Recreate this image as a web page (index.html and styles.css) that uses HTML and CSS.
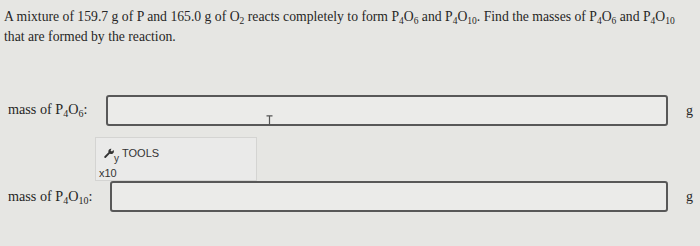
FILE: index.html
```html
<!DOCTYPE html>
<html>
<head>
<meta charset="utf-8">
<link rel="stylesheet" href="styles.css">
</head>
<body>
<div class="page">
  <p class="question">A mixture of 159.7 g of P and 165.0 g of O<sub>2</sub> reacts completely to form P<sub>4</sub>O<sub>6</sub> and P<sub>4</sub>O<sub>10</sub>. Find the masses of P<sub>4</sub>O<sub>6</sub> and P<sub>4</sub>O<sub>10</sub><br>that are formed by the reaction.</p>

  <div class="row row-first">
    <span class="label">mass of P<sub>4</sub>O<sub>6</sub>:</span>
    <div class="field">
      <svg class="ibeam" width="7" height="10" viewBox="0 0 7 10"><path d="M0.5 0.8 H6.5 M3.5 0.8 V9.5" stroke="#555" stroke-width="1.2" fill="none"/></svg>
    </div>
    <span class="unit">g</span>
  </div>

  <div class="tools">
    <div class="tools-top">
      <svg class="wrench" width="10" height="10" viewBox="0 0 10 10"><path d="M1.2 9 L6 4.2" stroke="#333" stroke-width="1.8" stroke-linecap="round" fill="none"/><path d="M4.6 4.4 A2.6 2.6 0 0 1 7.4 0.8 L6.6 2.8 L8 3.6 L9.4 2 A2.6 2.6 0 0 1 5.8 5.6 Z" fill="#333"/></svg>
      <span class="y">y</span>
      <span class="tools-label">TOOLS</span>
    </div>
    <div class="x10">x10</div>
  </div>

  <div class="row row-second">
    <span class="label">mass of P<sub>4</sub>O<sub>10</sub>:</span>
    <div class="field"></div>
    <span class="unit">g</span>
  </div>
</div>
</body>
</html>
```

FILE: styles.css
```css
html, body {
  margin: 0;
  padding: 0;
}
body {
  background: #e6e6e3;
  width: 700px;
  height: 246px;
  overflow: hidden;
  font-family: "Liberation Serif", "Times New Roman", serif;
  color: #262626;
}
.page {
  padding: 7px 0 0 4px;
}
.question {
  margin: 0;
  font-size: 13.7px;
  line-height: 20px;
}
sub {
  font-size: 9.5px;
  vertical-align: -3px;
  line-height: 0;
}
.row {
  display: flex;
  align-items: center;
  gap: 18px;
  padding-left: 4px;
  padding-right: 6px;
  height: 31px;
}
.row-first {
  margin-top: 48px;
}
.label {
  font-size: 14.2px;
  white-space: nowrap;
}
.label sub {
  font-size: 10px;
}
.row-first .label {
  margin-right: 1px;
  margin-bottom: 3px;
}
.row-second .label {
  margin-right: 0;
}
.field {
  flex: 1;
  height: 27px;
  border: 2px solid #585858;
  border-radius: 3px;
  background: #ebebe9;
  position: relative;
}
.unit {
  font-size: 14px;
  width: 8px;
}
.ibeam {
  position: absolute;
  left: 158px;
  top: 18px;
}
.tools {
  margin: 11px 0 0 91px;
  width: 160px;
  height: 42px;
  border: 1px solid #d4d4d2;
  background: #eaeae9;
  font-family: "Liberation Sans", Arial, sans-serif;
  color: #333;
}
.tools-top {
  display: flex;
  align-items: flex-start;
  padding: 10px 0 0 8px;
  height: 14px;
}
.y {
  font-size: 10px;
  margin-top: 6px;
  line-height: 10px;
}
.tools-label {
  font-size: 11px;
  line-height: 11px;
  margin-left: 3px;
}
.x10 {
  font-size: 11px;
  line-height: 12px;
  padding-left: 3px;
  margin-top: 5px;
}
```
